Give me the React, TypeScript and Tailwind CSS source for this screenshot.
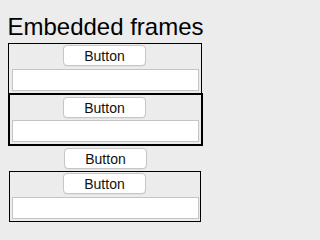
import React from "react";

function Btn({ className = "" }: { className?: string }) {
  return (
    <div
      className={`flex h-[21px] w-[83px] items-center justify-center rounded-[4px] border border-[#c6c6c6] bg-white text-[14px] leading-none text-[#111] shadow-[0_0.5px_0.5px_rgba(0,0,0,0.08)] ${className}`}
    >
      Button
    </div>
  );
}

function Field({ className = "" }: { className?: string }) {
  return <div className={`h-[22px] w-[187px] border border-[#c4c4c4] bg-white ${className}`} />;
}

export default function App() {
  return (
    <div className="min-h-screen w-full bg-[#ececec]">
      <div
        className="flex h-[232px] w-[211px] flex-col bg-[#ececec]"
        style={{ fontFamily: '"Liberation Sans", Arial, sans-serif' }}
      >
        <div className="h-[43px] pt-[15px] text-center text-[24px] leading-[23px] text-black">
          Embedded frames
        </div>
        <div className="ml-[8px] flex h-[50px] w-[194px] flex-col border-x border-t border-black">
          <Btn className="ml-[54px] mt-[1px]" />
          <Field className="ml-[3px] mt-[3px]" />
        </div>
        <div className="ml-[8px] flex h-[53px] w-[195px] flex-col border-2 border-black">
          <Btn className="ml-[53px] mt-[2px]" />
          <Field className="ml-[2px] mt-[2px]" />
        </div>
        <Btn className="ml-[64px] mt-[2px]" />
        <div className="ml-[9px] mt-[2px] flex h-[51px] w-[192px] flex-col border border-black">
          <Btn className="ml-[53px] mt-[1px]" />
          <Field className="ml-[2px] mt-[3px]" />
        </div>
      </div>
    </div>
  );
}
